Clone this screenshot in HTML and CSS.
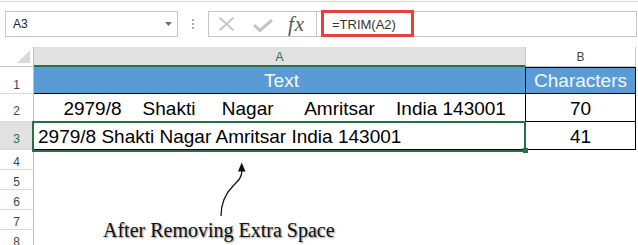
FILE: index.html
```html
<!DOCTYPE html>
<html>
<head>
  <title>TRIM</title>
  <meta charset="UTF-8">
  <link rel="stylesheet" href="styles.css">
</head>
<body>
  <div class="formula-bar">
    <div class="name-box">
      <span>A3</span>
      <svg class="caret" width="7" height="4" viewBox="0 0 7 4"><polygon points="0,0 7,0 3.5,4" fill="#6d6d6d"/></svg>
    </div>
    <div class="grip"><i></i><i></i><i></i></div>
    <div class="fx-buttons">
      <svg class="btn-x" width="17" height="14" viewBox="0 0 17 14"><path d="M1.5 0.5 L15.5 13.5 M15.5 0.5 L1.5 13.5" stroke="#c4c4c4" stroke-width="1.8" fill="none"/></svg>
      <svg class="btn-ok" width="20" height="13" viewBox="0 0 20 13"><path d="M1 6 L7 11.5 L19 1" stroke="#c4c4c4" stroke-width="3" fill="none"/></svg>
      <span class="fx">fx</span>
    </div>
    <div class="formula-input">
      <span class="formula">=TRIM(A2)</span>
      <div class="highlight"></div>
    </div>
  </div>

  <div class="sheet">
    <div class="corner"><svg width="33" height="19" viewBox="0 0 33 19"><polygon points="30,3 30,16 17,16" fill="#dadada"/></svg></div>
    <div class="col-head active">A</div>
    <div class="col-head">B</div>

    <div class="row-head r1">1</div>
    <div class="cell col-a head-cell r1">Text</div>
    <div class="cell col-b head-cell first r1">Characters</div>

    <div class="row-head tall">2</div>
    <div class="cell col-a pre tall">     2979/8    Shakti     Nagar      Amritsar    India 143001</div>
    <div class="cell col-b tall">70</div>

    <div class="row-head tall active">3</div>
    <div class="cell col-a tall">2979/8 Shakti Nagar Amritsar India 143001</div>
    <div class="cell col-b tall">41</div>

    <div class="row-head short">4</div><div></div><div></div>
    <div class="row-head short">5</div><div></div><div></div>
    <div class="row-head short">6</div><div></div><div></div>
    <div class="row-head short">7</div><div></div><div></div>
    <div class="row-head short">8</div><div></div><div></div>

    <div class="selection"><div class="handle"></div></div>

    <svg class="arrow" width="36" height="60" viewBox="0 0 36 60">
      <path d="M28 10 C28 17, 25 20, 19 26 C12 33, 7 42, 7 56" stroke="#111" stroke-width="1.3" fill="none"/>
      <polygon points="27.7,2.5 24,11.5 31.5,11.5" fill="#111"/>
    </svg>
    <div class="note">After Removing Extra Space</div>
  </div>
</body>
</html>
```

FILE: styles.css
```css
body {
  margin: 0;
  width: 638px;
  height: 245px;
  overflow: hidden;
  background-color: #fff;
  font-family: "Liberation Sans", Arial, sans-serif;
}
.formula-bar {
  display: flex;
  align-items: flex-start;
  box-sizing: border-box;
  height: 46px;
  margin-top: 1px;
  border-top: 1px solid #d5d5d5;
  padding: 9px 0 0 5px;
}
.name-box {
  box-sizing: border-box;
  width: 173px;
  height: 26px;
  border: 1px solid #c6c6c6;
  display: flex;
  align-items: center;
  justify-content: space-between;
  padding: 0 5px 0 7px;
  font-size: 12px;
  color: #222;
}
.grip {
  width: 30px;
  display: flex;
  flex-direction: column;
  align-items: center;
  gap: 2px;
  padding-top: 8px;
}
.grip i {
  display: block;
  width: 2px;
  height: 2px;
  background-color: #a8a8a8;
}
.fx-buttons {
  box-sizing: border-box;
  width: 109px;
  height: 26px;
  border: 1px solid #c6c6c6;
  display: flex;
  align-items: center;
  padding-left: 9px;
}
.btn-ok {
  margin-left: 18px;
  margin-top: 2px;
}
.fx {
  margin-left: 15px;
  font-family: "Liberation Serif", "Times New Roman", serif;
  font-style: italic;
  font-size: 21px;
  letter-spacing: 1px;
  color: #585858;
  line-height: 24px;
}
.formula-input {
  position: relative;
  box-sizing: border-box;
  width: 320px;
  height: 26px;
  border: 1px solid #c6c6c6;
  border-left: none;
  display: flex;
  align-items: center;
  padding-left: 15px;
}
.formula {
  font-size: 13px;
  color: #333;
}
.highlight {
  position: absolute;
  left: 4px;
  top: -2px;
  box-sizing: border-box;
  width: 93px;
  height: 27px;
  border: 3px solid #e8413b;
}
.sheet {
  position: relative;
  display: grid;
  grid-template-columns: 34px 492px 110px;
  grid-template-rows: 20px 27px 28px 28px repeat(5, 20px);
}
.sheet > div {
  box-sizing: border-box;
}
.corner {
  border-right: 1px solid #bfbfbf;
  border-bottom: 1px solid #c6c6c6;
}
.corner svg {
  display: block;
}
.col-head {
  font-size: 12px;
  color: #444;
  text-align: center;
  line-height: 18px;
  padding-top: 1px;
  border-right: 1px solid #c6c6c6;
  border-bottom: 1px solid #c6c6c6;
}
.col-head.active {
  background-color: #e1e1e1;
  color: #217346;
  border-bottom: 2px solid #217346;
}
.row-head {
  display: flex;
  justify-content: center;
  align-items: flex-end;
  font-size: 12px;
  line-height: 14px;
  color: #444;
  border-right: 1px solid #bfbfbf;
  border-bottom: 1px solid #dadada;
}
.row-head.r1 { padding-bottom: 1px; }
.row-head.tall { padding-bottom: 3px; }
.row-head.short { padding-bottom: 0; }
.row-head.active {
  background-color: #e1e1e1;
  color: #217346;
}
.cell {
  font-size: 19px;
  line-height: 24px;
  color: #000;
  white-space: pre;
  border-right: 1px solid #000;
  border-bottom: 1px solid #000;
}
.cell.tall { padding-top: 3px; }
.cell.r1 { padding-top: 2px; }
.col-a {
  padding-left: 4px;
}
.col-a.pre {
  padding-left: 3px;
}
.col-b {
  text-align: center;
}
.head-cell {
  background-color: #5b9bd5;
  color: #f4f8fc;
  text-align: center;
}
.head-cell.first {
  border-top: 1px solid #000;
  padding-top: 1px;
}
.selection {
  position: absolute;
  left: 32px;
  top: 74px;
  box-sizing: border-box;
  width: 494px;
  height: 31px;
  border: 2px solid #217346;
}
.handle {
  position: absolute;
  right: -4px;
  bottom: -3px;
  width: 5px;
  height: 5px;
  background-color: #217346;
}
.arrow {
  position: absolute;
  left: 214px;
  top: 113px;
}
.note {
  position: absolute;
  left: 103px;
  top: 173px;
  font-family: "Liberation Serif", "Times New Roman", serif;
  font-size: 20px;
  line-height: 20px;
  color: #111;
  text-shadow: 1px 1px 2px rgba(0, 0, 0, 0.45);
  white-space: nowrap;
}
```
